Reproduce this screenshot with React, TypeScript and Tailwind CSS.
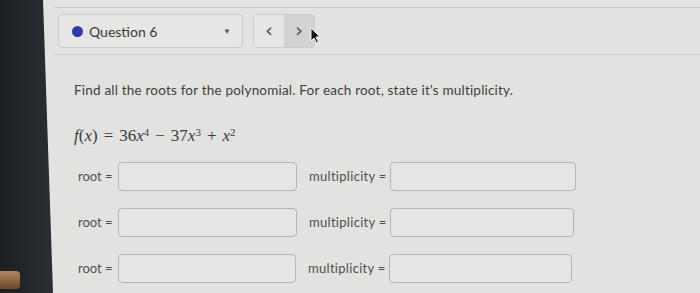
import React from "react"

const rows = [
  { rootW: "w-[179px]", multW: "w-[186px]" },
  { rootW: "w-[179px]", multW: "w-[184px]" },
  { rootW: "w-[178px]", multW: "w-[183px]" },
]

function Cursor() {
  return (
    <svg
      className="absolute left-[56px] top-[12px]"
      width="11"
      height="17"
      viewBox="0 0 11 17"
    >
      <path
        d="M1 1 L1 14 L4 11 L6.5 16 L8.5 15 L6 10 L10 10 Z"
        fill="#111"
        stroke="#f4f4f4"
        strokeWidth="1"
        strokeLinejoin="round"
      />
    </svg>
  )
}

export default function App() {
  return (
    <div className="flex h-[293px] w-[700px] overflow-hidden bg-[#e2e2e0] font-['Lato',sans-serif] text-[#444]">
      <div className="relative w-[54px] shrink-0 bg-gradient-to-r from-[#1c2024] to-[#2a2e34] [clip-path:polygon(0_0,43px_0,53px_100%,0_100%)]">
        <div className="absolute bottom-[4px] left-0 h-[18px] w-[20px] rounded-r-sm bg-gradient-to-b from-[#b4865a] to-[#6b4a2e]" />
      </div>

      <div className="flex-1 pt-[7px]">
        <div className="border-y border-[#c9c9c7] py-[6px] pl-[4px]">
          <div className="flex items-center gap-[10px]">
            <div className="flex h-[34px] w-[185px] items-center rounded-[4px] border border-[#cacac8] bg-[#e6e6e4] pl-[13px] pr-[11px]">
              <span className="h-[11px] w-[11px] rounded-full bg-[#2b3bb0]" />
              <span className="ml-[6px] text-[14px] text-[#3a3a3a]">Question 6</span>
              <span className="ml-auto text-[8px] text-[#555]">▼</span>
            </div>
            <div className="relative flex h-[34px] w-[62px] overflow-visible rounded-[4px] border border-[#cacac8]">
              <div className="flex w-1/2 items-center justify-center bg-[#e6e6e4] pb-[2px] font-['DejaVu_Sans',sans-serif] text-[20px] text-[#555]">
                ‹
              </div>
              <div className="flex w-1/2 items-center justify-center bg-[#d2d2d0] pb-[2px] font-['DejaVu_Sans',sans-serif] text-[20px] text-[#555]">
                ›
              </div>
              <Cursor />
            </div>
          </div>
        </div>

        <div className="pl-[20px] pt-[25px]">
          <p className="text-[13.5px] tracking-[0.2px] text-[#404040]">
            Find all the roots for the polynomial. For each root, state it's multiplicity.
          </p>

          <div className="mt-[23px] flex items-baseline font-['Liberation_Serif',serif] text-[17px] text-[#3a3a3a]">
            <span className="italic">f</span>
            <span>(</span>
            <span className="italic">x</span>
            <span>)</span>
            <span className="mx-[6px]">=</span>
            <span>36</span>
            <span className="italic">x</span>
            <sup className="text-[11px]">4</sup>
            <span className="mx-[6px]">−</span>
            <span>37</span>
            <span className="italic">x</span>
            <sup className="text-[11px]">3</sup>
            <span className="mx-[6px]">+</span>
            <span className="italic">x</span>
            <sup className="text-[11px]">2</sup>
          </div>

          <div className="mt-[13px] flex flex-col gap-[17px]">
            {rows.map((row, i) => (
              <div key={i} className="flex items-center text-[13px] text-[#505050]">
                <span className="ml-[4px] w-[40px]">root =</span>
                <div className={`h-[29px] ${row.rootW} rounded-[4px] border border-[#b4b4b2] bg-[#e5e5e3]`} />
                <span className="ml-[12px] w-[81px] tracking-[0.3px]">multiplicity =</span>
                <div className={`h-[29px] ${row.multW} rounded-[4px] border border-[#b4b4b2] bg-[#e5e5e3]`} />
              </div>
            ))}
          </div>
        </div>
      </div>
    </div>
  )
}
